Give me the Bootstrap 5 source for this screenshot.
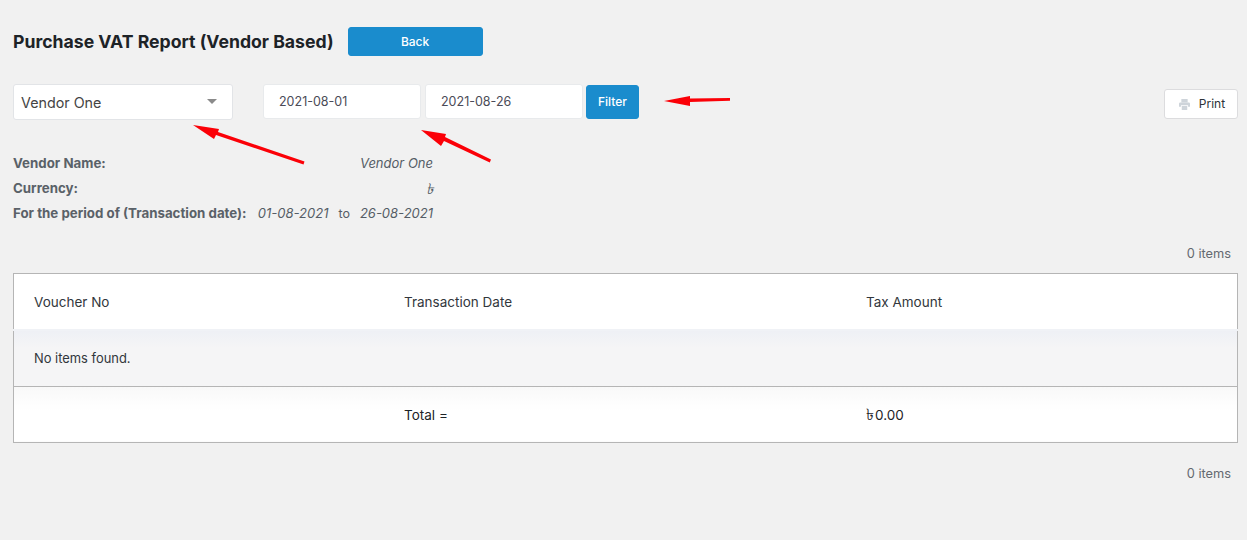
<!DOCTYPE html>
<html lang="en">
<head>
<meta charset="utf-8">
<title>Purchase VAT Report</title>
<link href="https://cdn.jsdelivr.net/npm/bootstrap@5.3.0/dist/css/bootstrap.min.css" rel="stylesheet">
<style>
html,body{height:540px;overflow:hidden}
body{background:#f1f1f1;font-family:Inter,"Liberation Sans","DejaVu Sans",sans-serif;font-size:13px;color:#32373c;position:relative}
.page-wrap{padding:27px 9px 0 13px}
.title-row{height:29px}
.report-title{font-size:17.65px;font-weight:700;color:#1d2327;margin:0 14px 0 0;line-height:29px}
.btn-wp{background:#1a8ccd;border:1px solid #1a8ccd;color:#fff;font-size:12px;font-weight:500;border-radius:3px;padding:0;height:29px;line-height:27px}
.btn-back{width:135px}
.filter-row{margin-top:28px;height:36px}
.vendor-box{width:220px;height:36px;background:#fff;border:1px solid #e2e4e7;border-radius:3px;padding:1px 15px 0 7px;font-size:14.3px;color:#444;margin-right:30px}
.caret-down{width:0;height:0;border-left:5px solid transparent;border-right:5px solid transparent;border-top:5px solid #8a8a8a;margin-top:-3px}
.date-box{width:158px;height:35px;background:#fff;border:1px solid #e8eaec;border-radius:3px;font-size:12.5px;color:#4b4b57;padding:0 15px;margin-right:4px}
.date-box:focus{outline:0;box-shadow:none;border-color:#e8eaec}
.btn-filter{width:53px;height:34px;margin:1px 0 0 -1px;line-height:30px}
.btn-print{width:74px;height:30px;margin-top:5px;background:#fff;border:1px solid #dcdcde;border-radius:3px;font-size:12px;color:#2c3338;padding:0 0 0 2px}
.print-ico{width:11px;height:11px;margin-right:9px}
.info-block{margin-top:31px;width:420px;font-size:13px;color:#555d66}
.info-line{height:25px;line-height:25px}
.info-line b{font-weight:700;font-size:13.3px;color:#5a6168}
.info-line i{font-size:13px}
.info-line .taka-small{font-size:15px}
.info-line .sep{margin:0 10px;font-size:12.5px}
.count-line{font-size:12.8px;color:#646970;text-align:right;padding-right:7px;line-height:20px}
.count-top{margin-top:18px}
.count-bottom{margin-top:21px}
.report-frame{margin-top:9px;border:1px solid #b5b5b5;background:#fff;height:170px;position:relative}
.report-frame::before{content:"";position:absolute;left:-1px;right:-1px;top:55px;height:2px;background:#f0f2f6}
.report-table{width:100%;table-layout:fixed;margin:0;font-size:13.5px;color:#32373c}
.report-table td,.report-table th{padding:0 0 0 20px;font-weight:400;vertical-align:middle;height:56px;border:0;background:transparent;box-shadow:none}
.col-a{width:370px}
.col-b{width:462px}
.head-row{height:56px}
.report-table .body-row td{background:linear-gradient(#eef0f5,#f5f5f6 18px,#f5f5f6);border-bottom:1px solid #b5b5b5;height:56px;font-size:12.9px;padding-top:2px}
.report-table .foot-row td{background:linear-gradient(#f8f8f8,#fff 24px);color:#1d2327;height:56px;padding-top:2px}
.taka-big{font-size:16px;line-height:1;margin-right:1px}
.arrows{position:absolute;left:0;top:0;pointer-events:none}
</style>
</head>
<body>
<div class="page-wrap">
  <div class="d-flex align-items-center title-row">
    <h1 class="report-title">Purchase VAT Report (Vendor Based)</h1>
    <a href="#" class="btn btn-wp btn-back">Back</a>
  </div>

  <div class="d-flex align-items-start filter-row">
    <div class="d-flex align-items-center justify-content-between vendor-box">
      <span>Vendor One</span><span class="caret-down"></span>
    </div>
    <input class="date-box" type="text" value="2021-08-01" aria-label="From">
    <input class="date-box" type="text" value="2021-08-26" aria-label="To">
    <button class="btn btn-wp btn-filter" type="button">Filter</button>
    <button class="btn btn-print ms-auto d-flex align-items-center justify-content-center" type="button">
      <svg class="print-ico" viewBox="0 0 14 14" aria-hidden="true"><path fill="#ced4da" d="M3 0h8v4H3zM1.500 4.500h11A1.500 1.500 0 0 1 14 6v4h-2.500V8h-9v2H0V6a1.500 1.500 0 0 1 1.500-1.500zM3.500 9h7v5h-7z"/></svg>Print
    </button>
  </div>

  <div class="info-block">
    <div class="d-flex justify-content-between info-line"><b>Vendor Name:</b><i>Vendor One</i></div>
    <div class="d-flex justify-content-between info-line"><b>Currency:</b><i class="taka-small">৳</i></div>
    <div class="d-flex justify-content-between info-line"><b>For the period of (Transaction date):</b><span><i>01-08-2021</i><span class="sep">to</span><i>26-08-2021</i></span></div>
  </div>

  <div class="count-line count-top">0 items</div>

  <div class="report-frame">
    <table class="table report-table">
      <thead>
        <tr class="head-row"><th class="col-a">Voucher No</th><th class="col-b">Transaction Date</th><th>Tax Amount</th></tr>
      </thead>
      <tbody>
        <tr class="body-row"><td colspan="3">No items found.</td></tr>
      </tbody>
      <tfoot>
        <tr class="foot-row"><td></td><td>Total =</td><td><span class="taka-big">৳</span>0.00</td></tr>
      </tfoot>
    </table>
  </div>

  <div class="count-line count-bottom">0 items</div>
</div>

<svg class="arrows" width="1247" height="540" aria-hidden="true">
  <g fill="#fb0007" stroke="none">
    <path d="M193 125 L219 129 L218 132 L304.500 161.500 L303.500 164.500 L216 135 L214 139Z"/>
    <path d="M421 130 L446 134 L445 137 L491 159.500 L489.800 162.500 L444 141 L441 146Z"/>
    <path d="M664 101 L690 96 L690 98.500 L730 98 L730 100.800 L690 102 L690 106Z"/>
  </g>
</svg>
</body>
</html>
